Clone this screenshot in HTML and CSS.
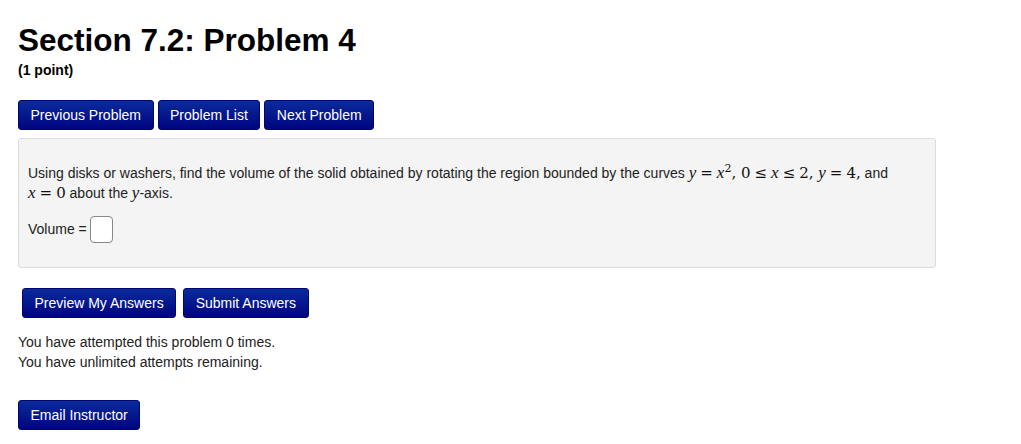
FILE: index.html
```html
<!DOCTYPE html>
<html>
<head>
<meta charset="utf-8">
<link rel="stylesheet" href="styles.css">
</head>
<body>
<div class="page">
  <h1 class="title">Section 7.2: Problem 4</h1>
  <div class="points">(1 point)</div>
  <div class="nav">
    <button class="btn">Previous Problem</button>
    <button class="btn">Problem List</button>
    <button class="btn">Next Problem</button>
  </div>
  <div class="problem">
    <p class="statement">Using disks or washers, find the volume of the solid obtained by rotating the region bounded by the curves <span class="m"><i>y</i><span class="op">=</span><i>x</i><sup>2</sup>, 0<span class="op">≤</span><i>x</i><span class="op">≤</span>2, <i>y</i><span class="op">=</span>4,</span> and<br><span class="m"><i>x</i><span class="op">=</span>0</span> about the <span class="m"><i>y</i></span>-axis.</p>
    <p class="answer">Volume = <span class="input"></span></p>
  </div>
  <div class="submit">
    <button class="btn">Preview My Answers</button>
    <button class="btn">Submit Answers</button>
  </div>
  <div class="attempts">
    <div>You have attempted this problem 0 times.</div>
    <div>You have unlimited attempts remaining.</div>
  </div>
  <div class="email">
    <button class="btn">Email Instructor</button>
  </div>
</div>
</body>
</html>
```
FILE: styles.css
```css
html, body {
  margin: 0;
  padding: 0;
  background: #fff;
}
body {
  font-family: "Liberation Sans", Arial, sans-serif;
  color: #222;
  font-size: 14px;
}
.page {
  padding: 22px 0 0 18px;
}
.title {
  margin: 0;
  font-size: 31.5px;
  line-height: 36px;
  font-weight: bold;
  color: #000;
}
.points {
  font-weight: bold;
  font-size: 14px;
  line-height: 16px;
  color: #000;
  margin-top: 4px;
}
.nav {
  display: flex;
  gap: 4px;
  margin-top: 22px;
}
.btn {
  font-family: "Liberation Sans", Arial, sans-serif;
  font-size: 14px;
  color: #fff;
  background: linear-gradient(#0a2b9c, #00047f);
  border: 1px solid #00066e;
  border-radius: 3px;
  height: 30px;
  padding: 0 11.5px;
}
.problem {
  width: 898px;
  margin-top: 8px;
  background: #f4f4f4;
  border: 1px solid #dcdcdc;
  border-radius: 3px;
  padding: 24px 9px 24px 9px;
}
.statement {
  margin: 0;
  line-height: 20px;
  color: #222;
}
.m {
  font-family: "DejaVu Serif", "Liberation Serif", serif;
  font-size: 15px;
  color: #111;
}
.m i {
  font-family: "Liberation Serif", serif;
  font-size: 17px;
}
.m sup {
  font-size: 11px;
  line-height: 0;
}
.op {
  margin: 0 4px;
}
.answer {
  margin: 12px 0 0 0;
  display: flex;
  align-items: center;
  gap: 3px;
  height: 28px;
}
.input {
  display: inline-block;
  width: 21px;
  height: 25px;
  background: #fff;
  border: 1px solid #888;
  border-radius: 4px;
}
.submit {
  display: flex;
  gap: 7px;
  margin: 20px 0 0 4px;
}
.attempts {
  margin-top: 14px;
  line-height: 20px;
}
.email {
  margin-top: 28px;
}
```
